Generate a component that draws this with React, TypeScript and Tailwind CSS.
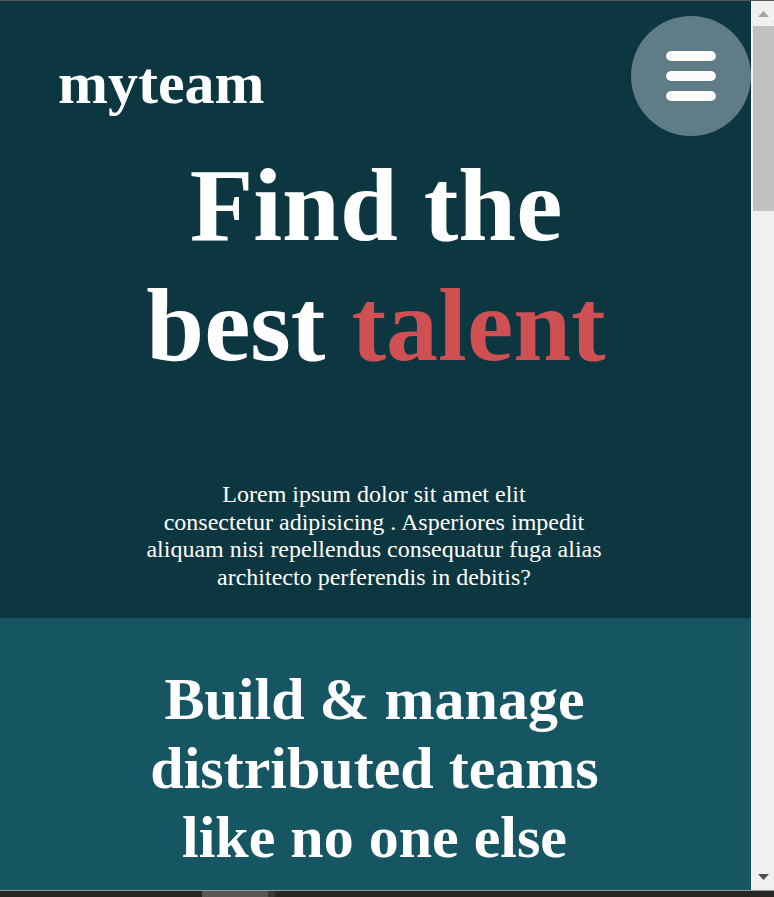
import React from "react";

export default function App() {
  return (
    <div className="w-[774px] h-[897px] overflow-hidden flex flex-col bg-[#0c3640]" style={{ fontFamily: '"Liberation Serif", "Times New Roman", serif' }}>
      <div className="h-px bg-[#56565a] shrink-0" />
      <div className="flex flex-1 min-h-0">
        <main className="w-[751px] shrink-0 overflow-hidden text-white">
          <section className="bg-[#0c3640] pb-[26px]">
            <header className="flex justify-between items-start">
              <div className="mt-[48px] pl-[58px] text-[60px] leading-[1.15] font-bold">myteam</div>
              <button className="mt-[15px] w-[120px] h-[120px] rounded-full bg-[#5f7c87] flex flex-col items-center justify-center gap-[10px]">
                <span className="block w-[50px] h-[10px] rounded-full bg-[#fafafa] shadow-[0_0_1px_rgba(0,0,0,0.4)]" />
                <span className="block w-[50px] h-[10px] rounded-full bg-[#fafafa] shadow-[0_0_1px_rgba(0,0,0,0.4)]" />
                <span className="block w-[50px] h-[10px] rounded-full bg-[#fafafa] shadow-[0_0_1px_rgba(0,0,0,0.4)]" />
              </button>
            </header>
            <h1 className="mt-[9px] text-center text-[104px] leading-[1.15] font-bold pl-[1px]">
              Find the
              <br />
              best <span className="text-[#ce5052]">talent</span>
            </h1>
            <p className="mt-[97px] text-center text-[24px] leading-[1.15] pr-[3px]">
              Lorem ipsum dolor sit amet elit
              <br />
              consectetur adipisicing . Asperiores impedit
              <br />
              aliquam nisi repellendus consequatur fuga alias
              <br />
              architecto perferendis in debitis?
            </p>
          </section>
          <section className="bg-[#155662] pt-[47px] pb-[40px]">
            <h2 className="text-center text-[60px] leading-[1.15] font-bold pr-[2px]">
              Build &amp; manage
              <br />
              distributed teams
              <br />
              like no one else
            </h2>
          </section>
        </main>
        <div className="w-[23px] shrink-0 bg-[#f0f0f0] flex flex-col">
          <div className="h-[25px] flex items-center justify-center pl-[1px]">
            <svg width="11" height="6" viewBox="0 0 11 6"><polygon points="5.5,0 11,6 0,6" fill="#a3a3a3" /></svg>
          </div>
          <div className="ml-[2px] h-[185px] bg-[#c1c1c1]" />
          <div className="flex-1" />
          <div className="h-[25px] flex items-center justify-center pl-[1px] pb-[2px]">
            <svg width="11" height="6" viewBox="0 0 11 6"><polygon points="0,0 11,0 5.5,6" fill="#505050" /></svg>
          </div>
        </div>
      </div>
      <div className="h-px bg-[#9a9a9a] shrink-0" />
      <div className="h-[6px] shrink-0 bg-[#2a2623] flex">
        <div className="w-[202px]" />
        <div className="w-[66px] bg-[#5a5755]" />
        <div className="w-[7px] bg-[#3a3735]" />
      </div>
    </div>
  );
}
